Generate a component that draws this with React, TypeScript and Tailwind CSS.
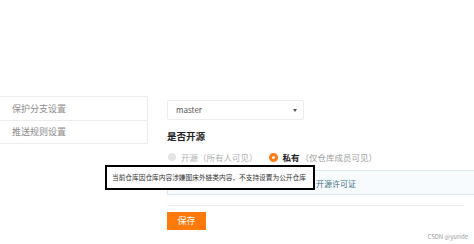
import React from "react";

const font = { fontFamily: '"Noto Sans CJK SC", "Noto Sans", sans-serif' };

function MenuItem({ label, last }: { label: string; last?: boolean }) {
  return (
    <div
      className={
        "h-[24px] flex items-center pl-[12px] text-[9px] text-[#8c8c8c] border-r border-t border-[#ececec] " +
        (last ? "border-b" : "")
      }
    >
      {label}
    </div>
  );
}

export default function App() {
  return (
    <div className="relative w-[474px] h-[244px] overflow-hidden bg-white" style={font}>
      <div className="flex pt-[96px]">
        <div className="w-[148px] shrink-0">
          <MenuItem label="保护分支设置" />
          <MenuItem label="推送规则设置" last />
        </div>

        <div className="ml-[19px] pt-[4px] flex-1 min-w-0">
          <div className="w-[137px] h-[20px] border border-[#ededed] rounded-[2px] flex items-center justify-between pl-[8px] pr-[6px]">
            <span className="text-[8px] text-[#555]">master</span>
            <span className="w-0 h-0 border-l-[2.5px] border-r-[2.5px] border-t-[3px] border-l-transparent border-r-transparent border-t-[#555]" />
          </div>

          <div className="mt-[10px] text-[9.5px] leading-[12px] font-bold text-[#222]">是否开源</div>

          <div className="mt-[9px] h-[12px] flex items-center text-[8.5px]">
            <span className="ml-[1px] w-[8px] h-[8px] rounded-full bg-[#e4e4e4]" />
            <span className="ml-[5px] text-[#b0b0b0]">开源（所有人可见）</span>
            <span className="ml-[11px] w-[9px] h-[9px] rounded-full border-[3px] border-[#ff7a10] bg-white" />
            <span className="ml-[5px] font-bold text-[#222]">私有</span>
            <span className="ml-[1px] text-[#a0a0a0]">（仅仓库成员可见）</span>
          </div>

          <div className="mt-[7px] w-[320px] h-[25px] border border-[#d9e8ee] bg-[#f7fbfd] flex items-center pl-[148px] pt-[3px] text-[8px] text-[#3f6f86]">
            开源许可证
          </div>

          <div className="mt-[10px] w-[297px] border-t border-[#f0f0f0]" />

          <button className="mt-[6px] w-[39px] h-[18px] bg-[#ff7a0a] text-white text-[9px] flex items-center justify-center">
            保存
          </button>
        </div>
      </div>

      <div className="absolute left-[105px] top-[165px] w-[210px] h-[25px] border-[2.5px] border-black bg-white flex items-center pl-[5px] text-[6.7px] text-[#333] whitespace-nowrap">
        当前仓库因仓库内容涉嫌图床外链类内容，不支持设置为公开仓库
      </div>

      <div className="absolute right-[6px] bottom-[3px] text-[6px] text-[#9a9a9a]">CSDN @yuride</div>
    </div>
  );
}
